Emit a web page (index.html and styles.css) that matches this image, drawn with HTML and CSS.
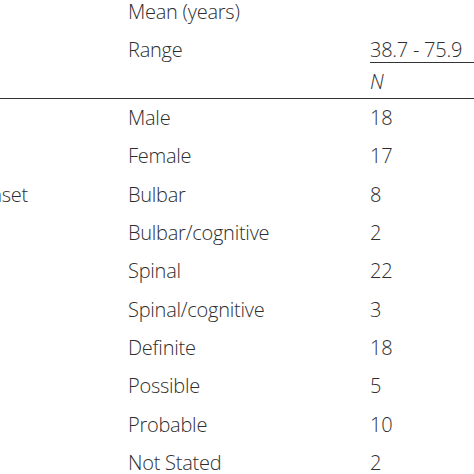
FILE: index.html
```html
<!DOCTYPE html>
<html>
<head>
<meta charset="utf-8">
<link rel="stylesheet" href="styles.css">
</head>
<body>
<div class="table">
  <div class="row top">
    <div class="c1"></div>
    <div class="c2">Mean (years)</div>
    <div class="c3"></div>
  </div>
  <div class="row range">
    <div class="c1"></div>
    <div class="c2">Range</div>
    <div class="c3 under">38.7 - 75.9</div>
  </div>
  <div class="row head">
    <div class="c1"></div>
    <div class="c2"></div>
    <div class="c3"><i>N</i></div>
  </div>
  <div class="row data"><div class="c1"></div><div class="c2">Male</div><div class="c3">18</div></div>
  <div class="row data"><div class="c1"></div><div class="c2">Female</div><div class="c3">17</div></div>
  <div class="row data"><div class="c1">Site of onset</div><div class="c2">Bulbar</div><div class="c3">8</div></div>
  <div class="row data"><div class="c1"></div><div class="c2">Bulbar/cognitive</div><div class="c3">2</div></div>
  <div class="row data"><div class="c1"></div><div class="c2">Spinal</div><div class="c3">22</div></div>
  <div class="row data"><div class="c1"></div><div class="c2">Spinal/cognitive</div><div class="c3">3</div></div>
  <div class="row data"><div class="c1"></div><div class="c2">Definite</div><div class="c3">18</div></div>
  <div class="row data"><div class="c1"></div><div class="c2">Possible</div><div class="c3">5</div></div>
  <div class="row data"><div class="c1"></div><div class="c2">Probable</div><div class="c3">10</div></div>
  <div class="row data"><div class="c1"></div><div class="c2">Not Stated</div><div class="c3">2</div></div>
</div>
</body>
</html>
```
FILE: styles.css
```css
html, body {
  margin: 0;
  padding: 0;
  background: #ffffff;
  overflow: hidden;
  width: 474px;
  height: 474px;
}
.table {
  margin-left: -82px;
  width: 556px;
  font-family: "Open Sans", "Noto Sans", sans-serif;
  font-size: 20px;
  font-weight: 350;
  letter-spacing: -0.25px;
  color: #2e2e2e;
}
.row {
  display: grid;
  grid-template-columns: 210px 242px 104px;
  white-space: nowrap;
}
.row > div {
  line-height: 24px;
}
.c1 {
  text-align: right;
  padding-right: 100px;
}
.top > div {
  height: 24px;
}
.range > div {
  padding-top: 14px;
}
.under {
  border-bottom: 1px solid #333333;
}
.head {
  border-bottom: 1px solid #333333;
}
.head > div {
  padding-top: 7px;
  height: 28px;
}
.data > div {
  line-height: 38.33px;
  height: 38.33px;
}
.head i {
  font-style: italic;
}
```
